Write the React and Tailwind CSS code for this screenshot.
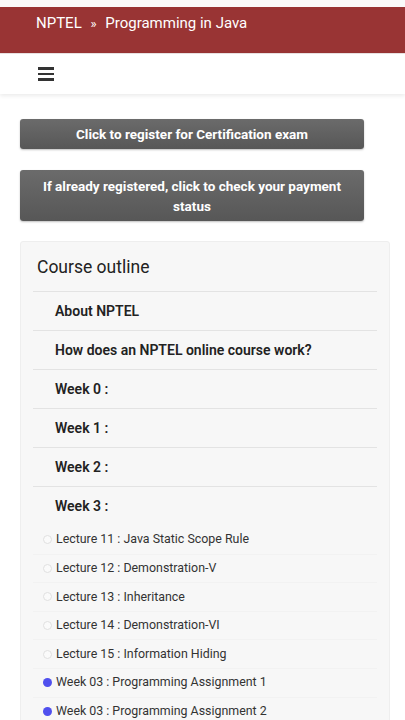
const lectures = [
  { title: "Lecture 11 : Java Static Scope Rule", done: false },
  { title: "Lecture 12 : Demonstration-V", done: false },
  { title: "Lecture 13 : Inheritance", done: false },
  { title: "Lecture 14 : Demonstration-VI", done: false },
  { title: "Lecture 15 : Information Hiding", done: false },
  { title: "Week 03 : Programming Assignment 1", done: true },
  { title: "Week 03 : Programming Assignment 2", done: true },
  { title: "Week 03 : Programming Assignment 3", done: true },
];

const sections = [
  "About NPTEL",
  "How does an NPTEL online course work?",
  "Week 0 :",
  "Week 1 :",
  "Week 2 :",
];

export default function App() {
  return (
    <main
      className="min-h-screen overflow-hidden bg-white text-[#222]"
      style={{ fontFamily: "Roboto, 'Liberation Sans', sans-serif" }}
    >
      <div className="h-[7px] bg-[#fafafa]" />
      <header className="h-[46px] bg-[#993434] px-9 pt-[5px] text-[15px] text-white">
        NPTEL <span className="mx-[5px] text-[13px]">»</span> Programming in Java
      </header>

      <nav className="flex h-[41px] items-center border-t border-[#e8e0e0] bg-white px-[38px] shadow-[0_2px_4px_rgba(0,0,0,0.08)]">
        <div className="flex w-4 flex-col gap-[3px]">
          <span className="h-[2.5px] bg-[#333]" />
          <span className="h-[2.5px] bg-[#333]" />
          <span className="h-[2.5px] bg-[#333]" />
        </div>
      </nav>

      <section className="px-5 pt-[25px]">
        <div className="flex w-[344px] flex-col gap-[21px]">
          <button className="h-[30px] rounded-[3px] bg-gradient-to-b from-[#6b6b6b] to-[#575757] text-[13.5px] font-bold text-white shadow-[0_1px_2px_rgba(0,0,0,0.25)]">
            Click to register for Certification exam
          </button>
          <button className="h-[51px] rounded-[3px] bg-gradient-to-b from-[#6b6b6b] to-[#575757] px-4 text-[13.5px] font-bold leading-[20px] text-white shadow-[0_1px_2px_rgba(0,0,0,0.25)]">
            If already registered, click to check your payment status
          </button>
        </div>

        <div className="mt-[20px] w-[370px] rounded-[3px] border border-[#eeeeee] bg-[#f7f7f7] px-3 pb-4">
          <h2 className="flex h-[49px] items-center pl-[4px] pt-[2px] text-[17.5px] text-[#222]">
            Course outline
          </h2>
          <ul>
            {sections.map((s) => (
              <li
                key={s}
                className="flex h-[39px] items-center border-t border-[#e3e3e3] pl-[22px] text-[14px] font-semibold text-[#222]"
              >
                {s}
              </li>
            ))}
            <li className="border-t border-[#e3e3e3]">
              <div className="flex h-[39px] items-center pl-[22px] text-[14px] font-semibold text-[#222]">
                Week 3 :
              </div>
              <ul>
                {lectures.map((l) => (
                  <li
                    key={l.title}
                    className="flex h-[28.6px] items-center border-b border-[#f2f2f2] pl-[10px] text-[12.4px] text-[#333]"
                  >
                    <span
                      className={
                        l.done
                          ? "mr-[4px] h-[9px] w-[9px] rounded-full bg-[#5050ee]"
                          : "mr-[4px] h-[9px] w-[9px] rounded-full border border-[#e0e0e0] bg-[#fafafa]"
                      }
                    />
                    {l.title}
                  </li>
                ))}
              </ul>
            </li>
          </ul>
        </div>
      </section>
    </main>
  );
}
